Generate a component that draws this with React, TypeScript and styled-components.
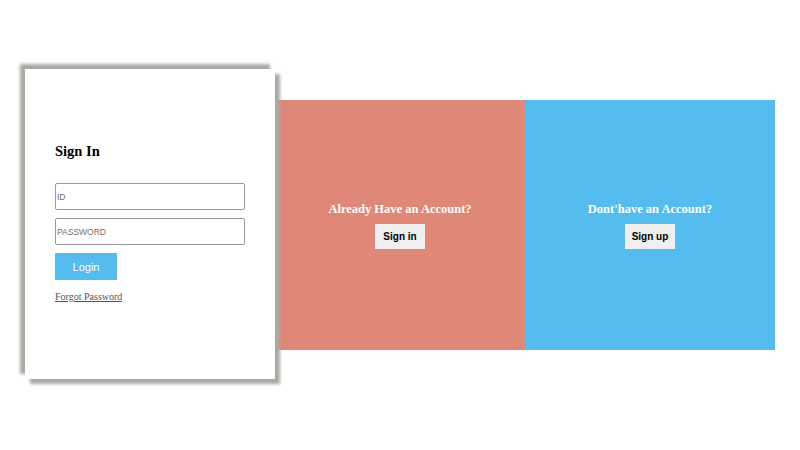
import styled, { createGlobalStyle } from 'styled-components';

const GlobalStyle = createGlobalStyle`
  html, body {
    margin: 0;
    padding: 0;
    background: #ffffff;
  }
  * {
    box-sizing: border-box;
  }
`

const Page = styled.div`
  height: 100vh;
  display: flex;
  align-items: center;
  justify-content: center;
`

const Stage = styled.div`
  display: flex;
  align-items: center;
`

// 로그인 카드 (위왼쪽/아래오른쪽 그림자)
const Card = styled.div`
  position: relative;
  z-index: 1;
  width: 250px;
  height: 310px;
  margin-top: -2px;
  background: #ffffff;
  box-shadow: -5px -5px 3px #a9a9a3, 5px 5px 3px #a9a9a3;
  display: flex;
  flex-direction: column;
  justify-content: center;
  padding: 0 30px 2px;
`

const Title = styled.h2`
  margin: 0 0 23px;
  font-family: "Liberation Serif", "Times New Roman", serif;
  font-size: 14.5px;
  line-height: 17px;
  font-weight: bold;
  color: #000000;
`

const Field = styled.input`
  width: 190px;
  height: 27px;
  margin: 0 0 8px;
  padding: 0 1px;
  border: 1px solid #9a9a9a;
  border-radius: 2px;
  font-family: "Liberation Sans", Arial, sans-serif;
  font-size: 8.5px;
  outline: none;

  &::placeholder {
    color: #6f6f6f;
  }
`

const LoginButton = styled.button`
  width: 62px;
  height: 27px;
  border: none;
  background: #54bcef;
  color: #ffffff;
  font-family: "Liberation Sans", Arial, sans-serif;
  font-size: 11px;
  cursor: pointer;
`

const Forgot = styled.a`
  display: block;
  margin-top: 11px;
  font-family: "Liberation Serif", "Times New Roman", serif;
  font-size: 10px;
  line-height: 12px;
  color: #555555;
  text-decoration: underline;
`

interface PanelProps {
  tone: string;
}

const Panel = styled.div<PanelProps>`
  width: 250px;
  height: 250px;
  background: ${props => props.tone};
  display: flex;
  flex-direction: column;
  align-items: center;
  justify-content: center;
`

const PanelTitle = styled.h3`
  margin: 0 0 7px;
  font-family: "Liberation Serif", "Times New Roman", serif;
  font-size: 12.5px;
  line-height: 15px;
  font-weight: bold;
  color: #ffffff;
`

const SwitchButton = styled.button`
  width: 50px;
  height: 25px;
  padding: 0;
  border: none;
  background: #efefef;
  color: #000000;
  font-family: "Liberation Sans", Arial, sans-serif;
  font-size: 10px;
  font-weight: bold;
  cursor: pointer;
`

export default function App() {
  return (
    <>
      <GlobalStyle />
      <Page>
        <Stage>
          <Card>
            <Title>Sign In</Title>
            <Field placeholder="ID" />
            <Field type="password" placeholder="PASSWORD" />
            <LoginButton>Login</LoginButton>
            <Forgot href="#">Forgot Password</Forgot>
          </Card>
          <Panel tone="#df8878">
            <PanelTitle>Already Have an Account?</PanelTitle>
            <SwitchButton>Sign in</SwitchButton>
          </Panel>
          <Panel tone="#54bcef">
            <PanelTitle>Dont'have an Account?</PanelTitle>
            <SwitchButton>Sign up</SwitchButton>
          </Panel>
        </Stage>
      </Page>
    </>
  );
}
